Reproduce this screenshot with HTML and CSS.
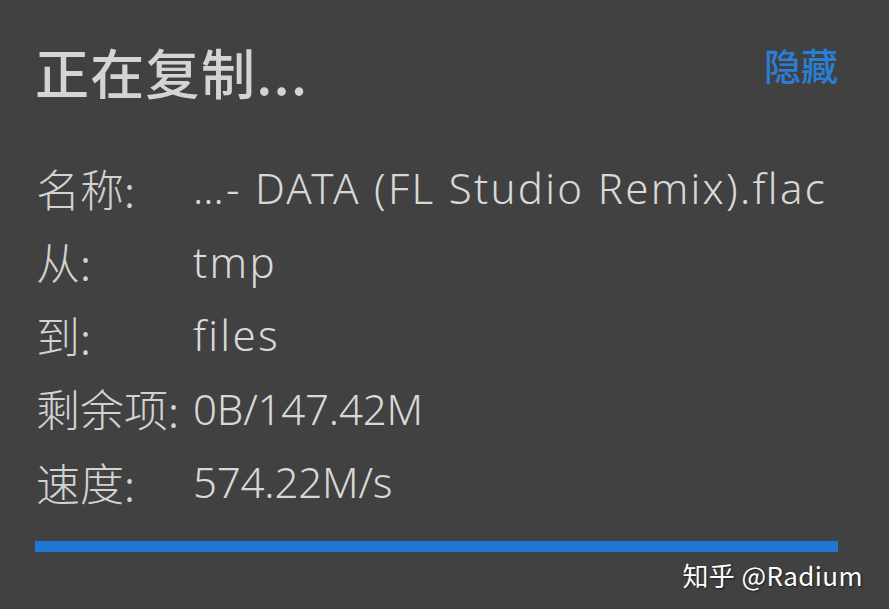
FILE: index.html
```html
<!DOCTYPE html>
<html lang="zh-CN">
<head>
<meta charset="utf-8">
<title>正在复制</title>
<link rel="stylesheet" href="styles.css">
</head>
<body>
<div class="dialog">
  <div class="header">
    <h1 class="title">正在复制...</h1>
    <span class="hide-btn">隐藏</span>
  </div>
  <div class="rows">
    <div class="row"><span class="label">名称:</span><span class="value value-wide">…- DATA (FL Studio Remix).flac</span></div>
    <div class="row"><span class="label">从:</span><span class="value value-wide">tmp</span></div>
    <div class="row"><span class="label">到:</span><span class="value value-wide">files</span></div>
    <div class="row"><span class="label">剩余项:</span><span class="value value-num">0B/147.42M</span></div>
    <div class="row"><span class="label">速度:</span><span class="value value-num">574.22M/s</span></div>
  </div>
  <div class="progress"><div class="progress-fill" style="width:100%"></div></div>
  <div class="watermark">知乎 @Radium</div>
</div>
</body>
</html>
```
FILE: styles.css
```css
* { box-sizing: border-box; }
html, body { margin: 0; padding: 0; }
body {
  background: #414141;
  width: 889px;
  height: 609px;
  overflow: hidden;
  font-family: "Noto Sans CJK SC", "Noto Sans", sans-serif;
  color: #d4d4d4;
}
.dialog {
  display: flex;
  flex-direction: column;
  padding: 0 51px 0 35px;
}
.header {
  display: flex;
  justify-content: space-between;
  align-items: flex-start;
  padding-top: 33px;
  height: 151px;
}
.title {
  margin: 0;
  font-size: 54px;
  font-weight: 500;
  line-height: 78px;
  letter-spacing: 1.3px;
  color: #d4d4d4;
}
.hide-btn {
  color: #2a7ed3;
  font-size: 37px;
  line-height: 64px;
  font-weight: 500;
}
.rows {
  display: flex;
  flex-direction: column;
}
.row {
  display: flex;
  height: 73.5px;
  align-items: center;
}
.label {
  width: 158px;
  flex: none;
  padding-left: 1px;
  font-family: "Noto Sans CJK SC", sans-serif;
  font-size: 44px;
  font-weight: 300;
  color: #d2d2d2;
}
.value {
  font-family: "Noto Sans", "Noto Sans CJK SC", sans-serif;
  font-size: 42px;
  font-weight: 300;
  color: #d8d8d8;
  white-space: nowrap;
}
.value-wide {
  letter-spacing: 2.3px;
}
.value-num {
  letter-spacing: -0.2px;
}
.progress {
  margin-top: 22px;
  height: 11px;
  width: 803px;
  background: #1f77d5;
}
.progress-fill {
  height: 100%;
  background: #1f77d5;
}
.watermark {
  align-self: flex-end;
  margin-top: 4px;
  margin-right: -25px;
  font-size: 26px;
  letter-spacing: 0.4px;
  color: #ffffff;
  text-shadow: 1px 1px 2px rgba(0,0,0,0.6);
}
```
